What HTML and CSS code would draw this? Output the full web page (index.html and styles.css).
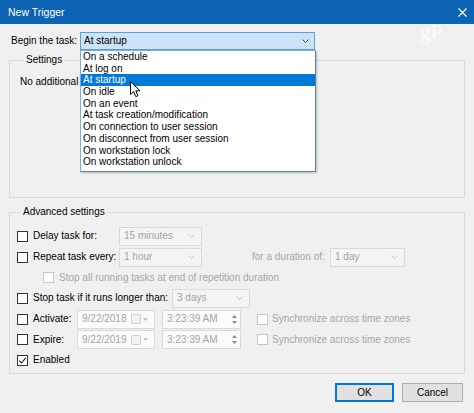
FILE: index.html
```html
<!DOCTYPE html>
<html lang="en">
<head>
    <meta charset="UTF-8">
    <title>New Trigger</title>
    <link rel="stylesheet" href="styles.css">
</head>
<body>
<div class="window">
    <div class="titlebar">
        <span class="title">New Trigger</span>
        <svg class="close" width="9" height="9" viewBox="0 0 9 9"><path d="M0.5 0.5L8.5 8.5M8.5 0.5L0.5 8.5" stroke="#fff" stroke-width="1.1"/></svg>
    </div>
    <div class="content">
        <div class="task-row">
            <span class="task-label">Begin the task:</span>
            <div class="combo">
                <span>At startup</span>
                <svg class="chev" width="7" height="4" viewBox="0 0 7 4"><path d="M0.5 0.5L3.5 3.5L6.5 0.5" fill="none" stroke="#444" stroke-width="1"/></svg>
            </div>
        </div>
        <fieldset class="group settings">
            <legend>Settings</legend>
            <p class="note">No additional</p>
        </fieldset>
        <fieldset class="group advanced">
            <legend>Advanced settings</legend>
            <div class="rows">
                <div class="row">
                    <span class="cb"></span>
                    <span class="lbl w-86">Delay task for:</span>
                    <div class="select w-83"><span>15 minutes</span><svg class="chev" width="7" height="4" viewBox="0 0 7 4"><path d="M0.5 0.5L3.5 3.5L6.5 0.5" fill="none" stroke="#c4c4c4" stroke-width="1"/></svg></div>
                </div>
                <div class="row">
                    <span class="cb"></span>
                    <span class="lbl w-86">Repeat task every:</span>
                    <div class="select w-83"><span>1 hour</span><svg class="chev" width="7" height="4" viewBox="0 0 7 4"><path d="M0.5 0.5L3.5 3.5L6.5 0.5" fill="none" stroke="#c4c4c4" stroke-width="1"/></svg></div>
                    <span class="lbl dim duration">for a duration of:</span>
                    <div class="select w-75"><span>1 day</span><svg class="chev" width="7" height="4" viewBox="0 0 7 4"><path d="M0.5 0.5L3.5 3.5L6.5 0.5" fill="none" stroke="#c4c4c4" stroke-width="1"/></svg></div>
                </div>
                <div class="row indent">
                    <span class="cb off"></span>
                    <span class="lbl dim">Stop all running tasks at end of repetition duration</span>
                </div>
                <div class="row">
                    <span class="cb"></span>
                    <span class="lbl w-139">Stop task if it runs longer than:</span>
                    <div class="select w-78"><span>3 days</span><svg class="chev" width="7" height="4" viewBox="0 0 7 4"><path d="M0.5 0.5L3.5 3.5L6.5 0.5" fill="none" stroke="#c4c4c4" stroke-width="1"/></svg></div>
                </div>
                <div class="row">
                    <span class="cb"></span>
                    <span class="lbl w-44">Activate:</span>
                    <div class="field date">
                        <span>9/22/2018</span>
                        <span class="cal"></span>
                        <svg width="5" height="3" viewBox="0 0 5 3"><path d="M0 0H5L2.5 3Z" fill="#c4c4c4"/></svg>
                    </div>
                    <div class="field time">
                        <span>3:23:39 AM</span>
                        <svg class="spin" width="5" height="11" viewBox="0 0 5 11"><path d="M0 4L2.5 1L5 4ZM0 7L2.5 10L5 7Z" fill="#8a8a8a"/></svg>
                    </div>
                    <span class="cb off sync"></span>
                    <span class="lbl dim">Synchronize across time zones</span>
                </div>
                <div class="row">
                    <span class="cb"></span>
                    <span class="lbl w-44">Expire:</span>
                    <div class="field date">
                        <span>9/22/2019</span>
                        <span class="cal"></span>
                        <svg width="5" height="3" viewBox="0 0 5 3"><path d="M0 0H5L2.5 3Z" fill="#c4c4c4"/></svg>
                    </div>
                    <div class="field time">
                        <span>3:23:39 AM</span>
                        <svg class="spin" width="5" height="11" viewBox="0 0 5 11"><path d="M0 4L2.5 1L5 4ZM0 7L2.5 10L5 7Z" fill="#8a8a8a"/></svg>
                    </div>
                    <span class="cb off sync"></span>
                    <span class="lbl dim">Synchronize across time zones</span>
                </div>
                <div class="row">
                    <span class="cb on"><svg width="9" height="9" viewBox="0 0 9 9"><path d="M1.2 4.6L3.6 7L7.8 1.8" fill="none" stroke="#222" stroke-width="1.1"/></svg></span>
                    <span class="lbl">Enabled</span>
                </div>
            </div>
        </fieldset>
        <div class="buttons">
            <div class="btn btn-ok">OK</div>
            <div class="btn btn-cancel">Cancel</div>
        </div>
    </div>

    <!-- open list of the combo box -->
    <ul class="dropdown">
        <li>On a schedule</li>
        <li>At log on</li>
        <li class="active">At startup</li>
        <li>On idle</li>
        <li>On an event</li>
        <li>At task creation/modification</li>
        <li>On connection to user session</li>
        <li>On disconnect from user session</li>
        <li>On workstation lock</li>
        <li>On workstation unlock</li>
    </ul>
    <svg class="cursor" width="11" height="17" viewBox="0 0 11 17"><path d="M0.5 0.5V13.5L3.6 10.6L5.8 15.6L7.9 14.7L5.8 9.8H10Z" fill="#fff" stroke="#000" stroke-width="1" stroke-linejoin="round"/></svg>
    <span class="watermark">gP</span>
</div>
</body>
</html>
```

FILE: styles.css
```css
body {
    margin: 0;
    background: #f0f0f0;
}
.window {
    position: relative;
    width: 474px;
    height: 413px;
    overflow: hidden;
    background: #f0f0f0;
    font-family: "Liberation Sans", Arial, sans-serif;
    font-size: 10px;
    line-height: 12px;
    color: #000;
}
.titlebar {
    height: 24px;
    background: #0b63b2;
    display: flex;
    align-items: center;
    justify-content: space-between;
    padding: 0 8px 0 8px;
    color: #fff;
    font-size: 10.5px;
}
.close {
    margin-right: -1px;
}
.content {
    padding: 8px 9px 0 9px;
}
.task-row {
    display: flex;
    align-items: center;
}
.task-label {
    width: 69px;
    padding-left: 2px;
}
.combo {
    width: 235px;
    height: 18px;
    box-sizing: border-box;
    background: #cce4f7;
    border: 1px solid #5a9fe0;
    display: flex;
    align-items: center;
    justify-content: space-between;
    padding: 0 5px 0 3px;
}
.group {
    margin: 0;
    border: 1px solid #dadada;
    box-sizing: border-box;
    min-width: 0;
}
.group legend {
    padding: 0 2px;
    margin-left: 4px;
    line-height: 12px;
}
.settings {
    margin-top: 4px;
    height: 144px;
    padding: 0 10px;
}
.note {
    margin: 10px 0 0 0;
    white-space: nowrap;
}
.advanced {
    margin-top: 8px;
    height: 168px;
    padding: 0 0 0 7px;
}
.rows {
    margin-top: 8px;
}
.row {
    display: flex;
    align-items: center;
    height: 20.7px;
}
.indent {
    padding-left: 26px;
}
.cb {
    width: 11px;
    height: 11px;
    box-sizing: border-box;
    border: 1px solid #333;
    background: #fff;
    margin-right: 5px;
    flex: none;
    display: flex;
    align-items: center;
    justify-content: center;
}
.cb.off {
    border-color: #c6c6c6;
}
.sync {
    margin-left: 16px;
    margin-right: 4px;
}
.lbl {
    white-space: nowrap;
    flex: none;
}
.dim {
    color: #a6a6a6;
}
.w-86 { width: 86px; }
.w-139 { width: 139px; }
.w-44 { width: 44px; }
.duration {
    margin-left: 50px;
    width: 78px;
}
.select, .field {
    height: 19px;
    box-sizing: border-box;
    border: 1px solid #d9d9d9;
    background: #f4f4f4;
    color: #a3a3a3;
    display: flex;
    align-items: center;
    justify-content: space-between;
    padding: 0 6px 0 4px;
    flex: none;
}
.w-83 { width: 83px; }
.w-75 { width: 75px; }
.w-78 { width: 78px; }
.field {
    background: #fbfbfb;
}
.date {
    width: 78px;
}
.date span:first-child {
    flex: 1;
}
.cal {
    width: 8px;
    height: 8px;
    border: 1px solid #cfcfcf;
    border-radius: 1px;
    background: #f2f2f2;
    margin-right: 2px;
}
.time {
    width: 79px;
    margin-left: 7px;
    padding-right: 3px;
}
.buttons {
    display: flex;
    justify-content: flex-end;
    gap: 8px;
    margin-top: 9px;
    margin-right: 2px;
}
.btn {
    height: 19px;
    box-sizing: border-box;
    background: #e1e1e1;
    border: 1px solid #adadad;
    text-align: center;
    line-height: 17px;
}
.btn-ok {
    width: 59px;
    border: 2px solid #0078d7;
    line-height: 15px;
}
.btn-cancel {
    width: 61px;
}
.dropdown {
    position: absolute;
    left: 80px;
    top: 50px;
    width: 236px;
    height: 122px;
    box-sizing: border-box;
    margin: 0;
    padding: 0;
    list-style: none;
    background: #fff;
    border: 1px solid #4f86b8;
    border-top-color: #7aaede;
    border-left-color: #7aaede;
    box-shadow: 1px 1px 2px rgba(0, 0, 0, 0.25);
}
.dropdown li {
    height: 11.7px;
    line-height: 11.7px;
    padding-left: 2px;
}
.dropdown .active {
    background: #0078d7;
    color: #fff;
}
.cursor {
    position: absolute;
    left: 130px;
    top: 81px;
}
.watermark {
    position: absolute;
    left: 420px;
    top: 26px;
    font-family: "Liberation Serif", serif;
    font-size: 21px;
    color: #fbfbfb;
}
```
